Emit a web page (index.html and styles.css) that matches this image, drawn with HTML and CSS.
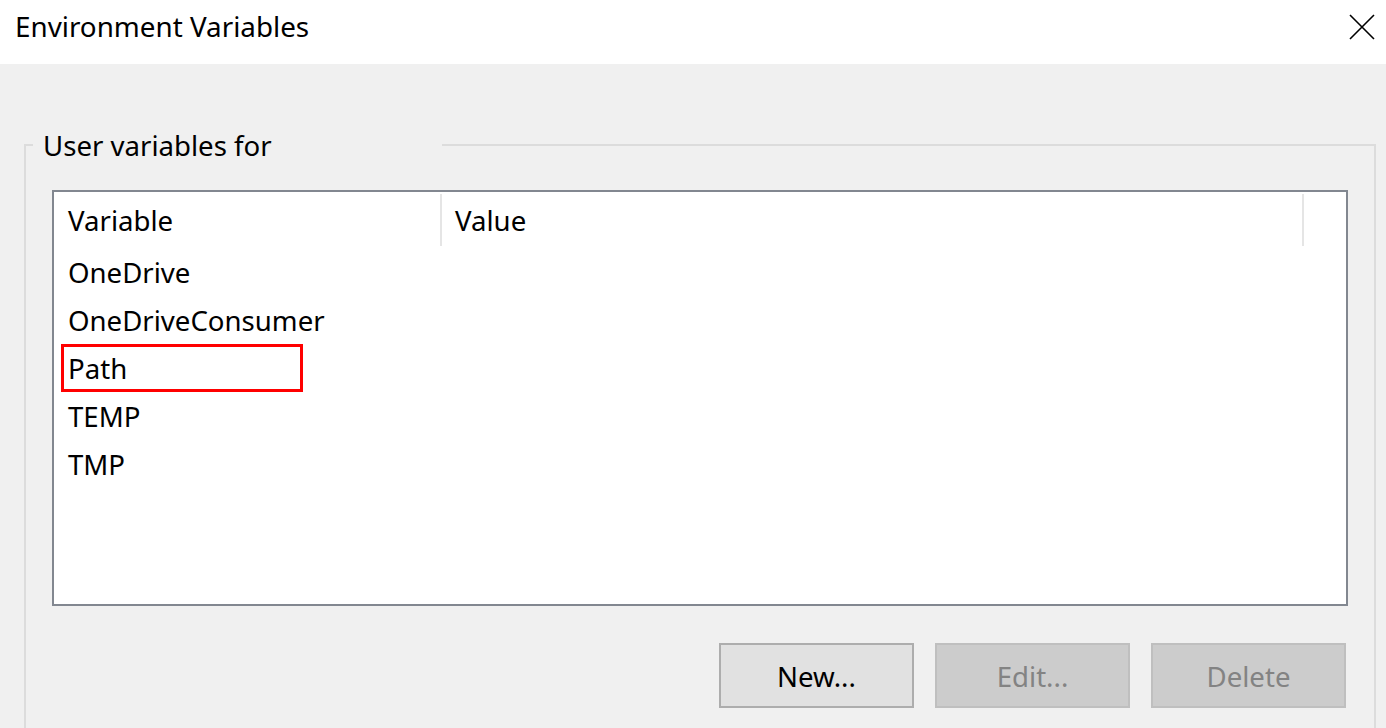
FILE: index.html
```html
<!DOCTYPE html>
<html lang="en">
<head>
<meta charset="utf-8">
<title>Environment Variables</title>
<link rel="stylesheet" href="styles.css">
</head>
<body>
<div class="dialog">
  <header class="titlebar">
    <span class="title">Environment Variables</span>
    <button class="close" aria-label="Close">
      <svg width="26" height="26" viewBox="0 0 26 26"><path d="M1 1 L25 25 M25 1 L1 25" stroke="#000" stroke-width="1.6" fill="none"/></svg>
    </button>
  </header>
  <main class="body">
    <fieldset class="group">
      <legend class="legend">User variables for</legend>
      <div class="listbox">
        <div class="list-header">
          <div class="col col-var">Variable</div>
          <div class="col col-val">Value</div>
        </div>
        <div class="row">OneDrive</div>
        <div class="row">OneDriveConsumer</div>
        <div class="row"><span class="marked">Path</span></div>
        <div class="row">TEMP</div>
        <div class="row">TMP</div>
      </div>
      <div class="buttons">
        <button class="btn">New...</button>
        <button class="btn" disabled>Edit...</button>
        <button class="btn" disabled>Delete</button>
      </div>
    </fieldset>
  </main>
</div>
</body>
</html>
```
FILE: styles.css
```css
* { box-sizing: border-box; }
html, body {
  margin: 0;
  padding: 0;
  height: 100%;
  overflow: hidden;
}
body {
  background: #f0f0f0;
  font-family: "Noto Sans", "Open Sans", "Liberation Sans", sans-serif;
  font-size: 27.6px;
  color: #000;
}
.titlebar {
  height: 64px;
  background: #fff;
  display: flex;
  align-items: center;
  justify-content: space-between;
  padding: 0 11px 10px 15px;
}
.title {
  font-size: 27.8px;
  line-height: 1;
}
.close {
  border: 0;
  background: transparent;
  padding: 0;
  width: 26px;
  height: 26px;
  display: flex;
}
.body {
  padding: 63px 10px 0 24px;
}
.group {
  margin: 0;
  padding: 0;
  border: 2px solid #dcdcdc;
  border-bottom: 0;
  height: calc(100vh - 127px);
}
.legend {
  margin-left: 7px;
  padding: 0 10px;
  width: 409px;
  line-height: 36px;
  font-size: 27.6px;
}
.listbox {
  margin: 27px 26px 0 26px;
  height: 416px;
  background: #fff;
  border: 2px solid #828790;
}
.list-header {
  display: flex;
  height: 56px;
  padding: 2px 0 2px;
}
.col {
  display: flex;
  align-items: center;
  padding-left: 14px;
  border-right: 2px solid #e5e5e5;
}
.col-var { width: 388px; }
.col-val { width: 862px; padding-left: 13px; }
.row {
  height: 48px;
  display: flex;
  align-items: center;
  padding-left: 14px;
}
.marked {
  display: flex;
  align-items: center;
  margin-left: -7px;
  width: 242px;
  height: 48px;
  padding-left: 4px;
  border: 3px solid #ff0000;
}
.buttons {
  display: flex;
  justify-content: flex-end;
  gap: 21px;
  margin: 37px 28px 0 0;
}
.btn {
  width: 195px;
  height: 65px;
  font-family: inherit;
  font-size: 27.6px;
  color: #000;
  background: #e1e1e1;
  border: 2px solid #adadad;
  padding: 0;
}
.btn:disabled {
  background: #cccccc;
  border-color: #bfbfbf;
  color: #838383;
}
```
